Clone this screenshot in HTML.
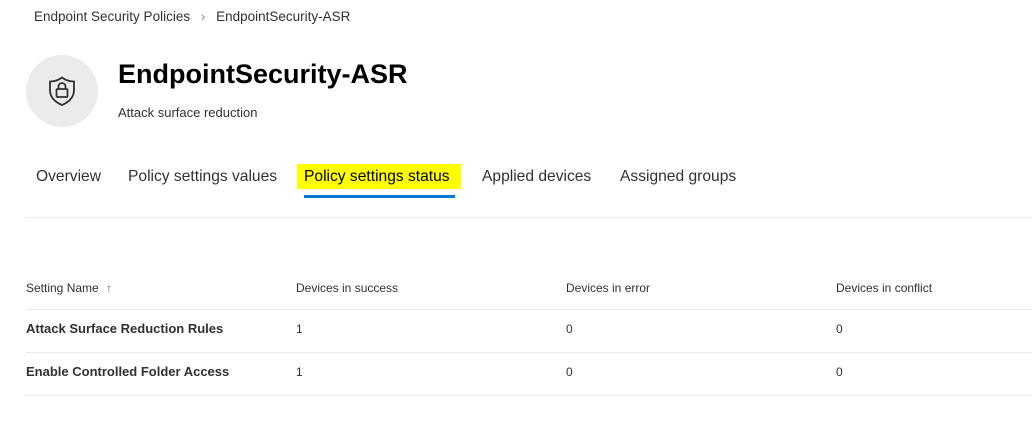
<!DOCTYPE html>
<html><head><meta charset="utf-8"><style>
body{margin:0;width:1032px;height:427px;background:#fff;font-family:"Segoe UI","Liberation Sans",sans-serif;color:#323130;position:relative;overflow:hidden}
.a{position:absolute;white-space:nowrap}
.line{position:absolute;height:1px;background:#edebe9}
</style></head><body>
<div class="a" style="left:34px;top:9px;font-size:13.5px;color:#323130">Endpoint Security Policies <span style="color:#8a8886;margin:0 7px">&#8250;</span> EndpointSecurity-ASR</div>
<div class="a" style="left:26px;top:55px;width:72px;height:72px;border-radius:50%;background:#ebebeb"></div>
<svg class="a" style="left:47px;top:75px" width="30" height="32" viewBox="0 0 30 32" fill="none" stroke="#323130" stroke-width="1.8">
<path d="M15 2.5 C11 5.5 7 6.5 3 6.5 V15 C3 22 8 27 15 30 C22 27 27 22 27 15 V6.5 C23 6.5 19 5.5 15 2.5 Z"/>
<rect x="9.5" y="14" width="11" height="8" rx="1"/>
<path d="M11.5 14 V11.5 a3.5 3.5 0 0 1 7 0 V14"/>
</svg>
<div class="a" style="left:118px;top:59px;font-size:27px;font-weight:bold;color:#000">EndpointSecurity-ASR</div>
<div class="a" style="left:118px;top:105px;font-size:13px">Attack surface reduction</div>
<div class="a" style="left:297px;top:164px;width:164px;height:25px;background:#ffff00"></div>
<div class="a" style="left:36px;top:168px;font-size:15.6px">Overview</div>
<div class="a" style="left:128px;top:168px;font-size:15.6px">Policy settings values</div>
<div class="a" style="left:304px;top:168px;font-size:15.6px;color:#000">Policy settings status</div>
<div class="a" style="left:482px;top:168px;font-size:15.6px">Applied devices</div>
<div class="a" style="left:620px;top:168px;font-size:15.6px">Assigned groups</div>
<div class="a" style="left:304px;top:195px;width:151px;height:3px;background:#0078d4"></div>
<div class="line" style="left:26px;top:217px;width:1006px"></div>
<div class="a" style="left:26px;top:281px;font-size:12px">Setting Name <span style="color:#605e5c;margin-left:4px">&#8593;</span></div>
<div class="a" style="left:296px;top:281px;font-size:12px">Devices in success</div>
<div class="a" style="left:566px;top:281px;font-size:12px">Devices in error</div>
<div class="a" style="left:836px;top:281px;font-size:12px">Devices in conflict</div>
<div class="line" style="left:26px;top:309px;width:1006px"></div>
<div class="a" style="left:26px;top:321px;font-size:13px;font-weight:bold">Attack Surface Reduction Rules</div>
<div class="a" style="left:296px;top:322px;font-size:12px">1</div>
<div class="a" style="left:566px;top:322px;font-size:12px">0</div>
<div class="a" style="left:836px;top:322px;font-size:12px">0</div>
<div class="line" style="left:26px;top:352px;width:1006px"></div>
<div class="a" style="left:26px;top:364px;font-size:13px;font-weight:bold">Enable Controlled Folder Access</div>
<div class="a" style="left:296px;top:365px;font-size:12px">1</div>
<div class="a" style="left:566px;top:365px;font-size:12px">0</div>
<div class="a" style="left:836px;top:365px;font-size:12px">0</div>
<div class="line" style="left:26px;top:395px;width:1006px"></div>
</body></html>
